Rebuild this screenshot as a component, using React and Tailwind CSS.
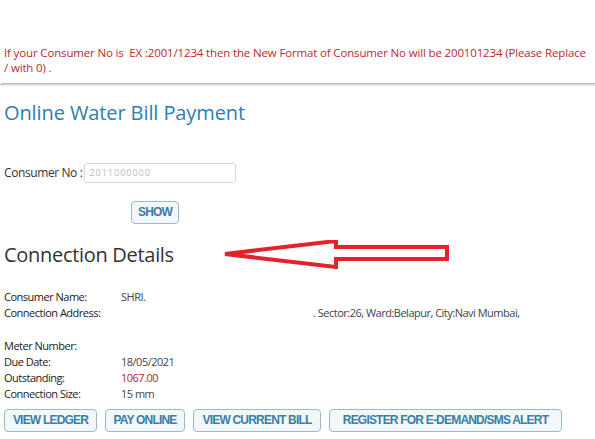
import React from "react";

const rows = [
  { label: "Consumer Name:", value: "SHRI." },
  { label: "Connection Address:", value: "", extra: ". Sector:26, Ward:Belapur, City:Navi Mumbai," },
  { gap: true },
  { label: "Meter Number:", value: "" },
  { label: "Due Date:", value: "18/05/2021" },
  { label: "Outstanding:", value: "1067.00", red: true },
  { label: "Connection Size:", value: "15 mm" },
];

function Btn({ children, className = "" }) {
  return (
    <button
      className={
        "h-[23px] whitespace-nowrap rounded-[4px] border border-[#9fb8c6] bg-[#f2f7fa] px-0 text-[12px] font-bold tracking-[-0.8px] text-[#3b7ea6] " +
        className
      }
      style={{ fontFamily: '"Liberation Sans", Arial, sans-serif' }}
    >
      {children}
    </button>
  );
}

function Arrow() {
  return (
    <svg width="230" height="32" viewBox="0 0 230 32" className="ml-[48px] mt-[2px]">
      <path
        d="M3 14 L114 1 L114 7 L225 7 L225 19 L114 19 L114 27 Z"
        fill="none"
        stroke="#e3222c"
        strokeWidth="4"
        strokeLinejoin="miter"
      />
    </svg>
  );
}

export default function App() {
  return (
    <div
      className="h-[439px] w-[595px] overflow-hidden bg-white text-[#333]"
      style={{ fontFamily: '"Open Sans", sans-serif' }}
    >
      <div className="whitespace-nowrap px-[4px] pt-[45px] text-[11.5px] leading-[15px] tracking-[-0.15px] text-[#c2262e]">
        If your Consumer No is&nbsp; EX :2001/1234 then the New Format of Consumer No will be 200101234 (Please Replace
        <br />/ with 0) .
      </div>
      <div className="mt-[8px] h-[3px] rounded-tl-[3px] border-t border-[#b5bcc2] bg-gradient-to-b from-[#d0d5da] to-[#eef0f2]" />

      <h1 className="mt-[14px] px-[4px] text-[20px] leading-[26px] tracking-[-0.1px] text-[#2f7db3]">
        Online Water Bill Payment
      </h1>

      <div className="mt-[37px] flex items-center px-[4px]">
        <span className="text-[12px] tracking-[-0.4px]">Consumer No :</span>
        <div className="ml-[2px] flex h-[20px] w-[152px] items-center rounded-[3px] border border-[#d4d8dc] bg-white px-[4px] text-[9px] tracking-[1px] text-[#bbb]">
          2011000000
        </div>
      </div>

      <div className="mt-[15px] pl-[131px]">
        <Btn className="h-[22px] w-[48px] text-[12.5px] tracking-[-0.3px]">SHOW</Btn>
      </div>

      <div className="mt-[14px] flex items-center px-[4px]">
        <h2 className="text-[20px] leading-[26px] tracking-[-0.3px] text-[#333]">Connection Details</h2>
        <Arrow />
      </div>

      <div className="mt-[17px] px-[4px] text-[11px] leading-[16px] tracking-[-0.5px]">
        {rows.map((r, i) =>
          r.gap ? (
            <div key={i} className="h-[17px]" />
          ) : (
            <div key={i} className="flex">
              <span className="w-[117px] shrink-0 text-[#222]">{r.label}</span>
              <span className={r.red ? "text-[#b3262c]" : "text-[#444]"}>{r.value}</span>
              {r.extra && <span className="ml-[192px] text-[#444]">{r.extra}</span>}
            </div>
          )
        )}
      </div>

      <div className="mt-[7px] flex gap-[8px] px-[4px]">
        <Btn className="w-[93px]">VIEW LEDGER</Btn>
        <Btn className="w-[80px]">PAY ONLINE</Btn>
        <Btn className="w-[128px]">VIEW CURRENT BILL</Btn>
        <Btn className="w-[233px]">REGISTER FOR E-DEMAND/SMS ALERT</Btn>
      </div>
    </div>
  );
}
